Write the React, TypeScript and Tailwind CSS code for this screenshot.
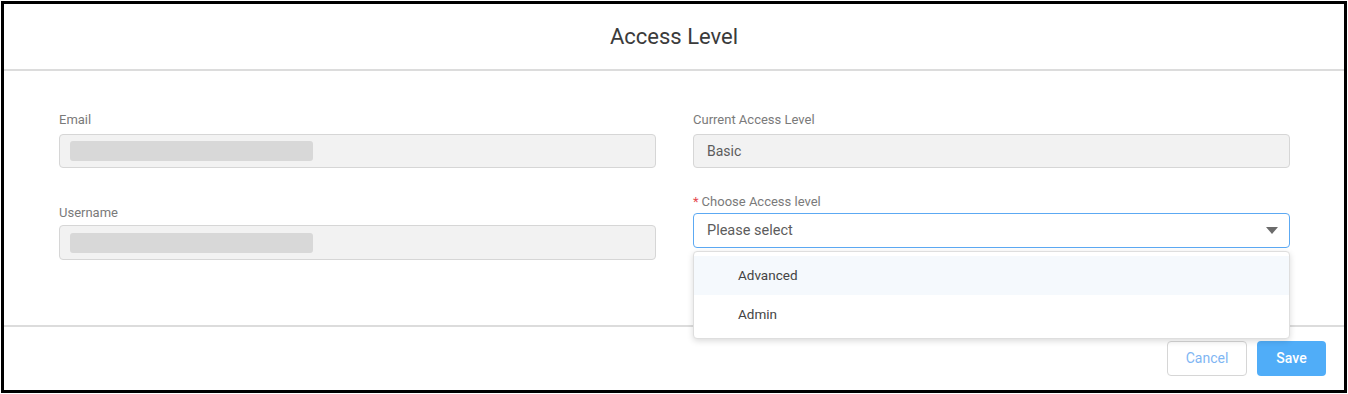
import React from "react";

function Label({ children, required }: { children: React.ReactNode; required?: boolean }) {
  return (
    <div className="h-4 text-[13px] leading-4 text-[#7a7a7a]">
      {required && <span className="mr-[3px] text-[#e5484d]">*</span>}
      {children}
    </div>
  );
}

export default function App() {
  return (
    <div className="h-[394px] w-[1348px] bg-white p-px" style={{ fontFamily: "Roboto, 'Liberation Sans', sans-serif" }}>
      <div className="flex h-[392px] w-[1346px] flex-col border-[3px] border-black bg-white">
        {/* Header */}
        <div className="flex h-[67px] shrink-0 items-center justify-center border-b-2 border-[#dcdcdc]">
          <h1 className="text-[22px] leading-6 text-[#3b3b3b]">Access Level</h1>
        </div>

        {/* Body */}
        <div className="relative z-10 grid h-[254px] shrink-0 grid-cols-2 gap-[37px] pl-[55px] pr-[54px] pt-[41px]">
          <div className="flex flex-col">
            <Label>Email</Label>
            <div className="mt-[6px] flex h-[34px] items-center rounded-[4px] border border-[#d6d6d6] bg-[#f2f2f2] px-[10px]">
              <div className="h-[20px] w-[243px] rounded-[3px] bg-[#d8d8d8]" />
            </div>
            <div className="mt-[37px]">
              <Label>Username</Label>
            </div>
            <div className="mt-[4px] flex h-[35px] items-center rounded-[4px] border border-[#d6d6d6] bg-[#f2f2f2] px-[10px]">
              <div className="h-[20px] w-[243px] rounded-[3px] bg-[#d8d8d8]" />
            </div>
          </div>

          <div className="flex flex-col">
            <Label>Current Access Level</Label>
            <div className="mt-[6px] flex h-[34px] items-center rounded-[4px] border border-[#d6d6d6] bg-[#f2f2f2] px-[13px] text-[14px] text-[#5c5c5c]">
              Basic
            </div>
            <div className="mt-[26px]">
              <Label required>Choose Access level</Label>
            </div>
            <div className="relative mt-[3px]">
              <div className="flex h-[35px] items-center justify-between rounded-[4px] border-[1.5px] border-[#5ca9f3] bg-white pl-[13px] pr-[11px] text-[14.5px] text-[#5c5c5c]">
                <span>Please select</span>
                <svg width="12" height="7" viewBox="0 0 12 7" aria-hidden="true">
                  <path d="M0 0 L12 0 L6 7 Z" fill="#6b6b6b" />
                </svg>
              </div>
              <div className="absolute left-0 right-0 top-[38px] rounded-[4px] border border-[#dedede] bg-white py-[4px] shadow-[0_2px_6px_rgba(0,0,0,0.15)]">
                <div className="flex h-[39px] items-center bg-[#f5f9fd] pl-[44px] text-[13.5px] text-[#444444]">Advanced</div>
                <div className="flex h-[39px] items-center pl-[44px] text-[13.5px] text-[#444444]">Admin</div>
              </div>
            </div>
          </div>
        </div>

        {/* Footer */}
        <div className="flex flex-1 items-start justify-end gap-[10px] border-t-2 border-[#dcdcdc] pr-[18px] pt-[14px]">
          <button className="h-[35px] w-[80px] rounded-[4px] border border-[#d6d6d6] bg-white text-[14px] text-[#7fb6f3]">
            Cancel
          </button>
          <button className="h-[35px] w-[69px] rounded-[4px] bg-[#50adf8] text-[14px] font-medium text-white">
            Save
          </button>
        </div>
      </div>
    </div>
  );
}
